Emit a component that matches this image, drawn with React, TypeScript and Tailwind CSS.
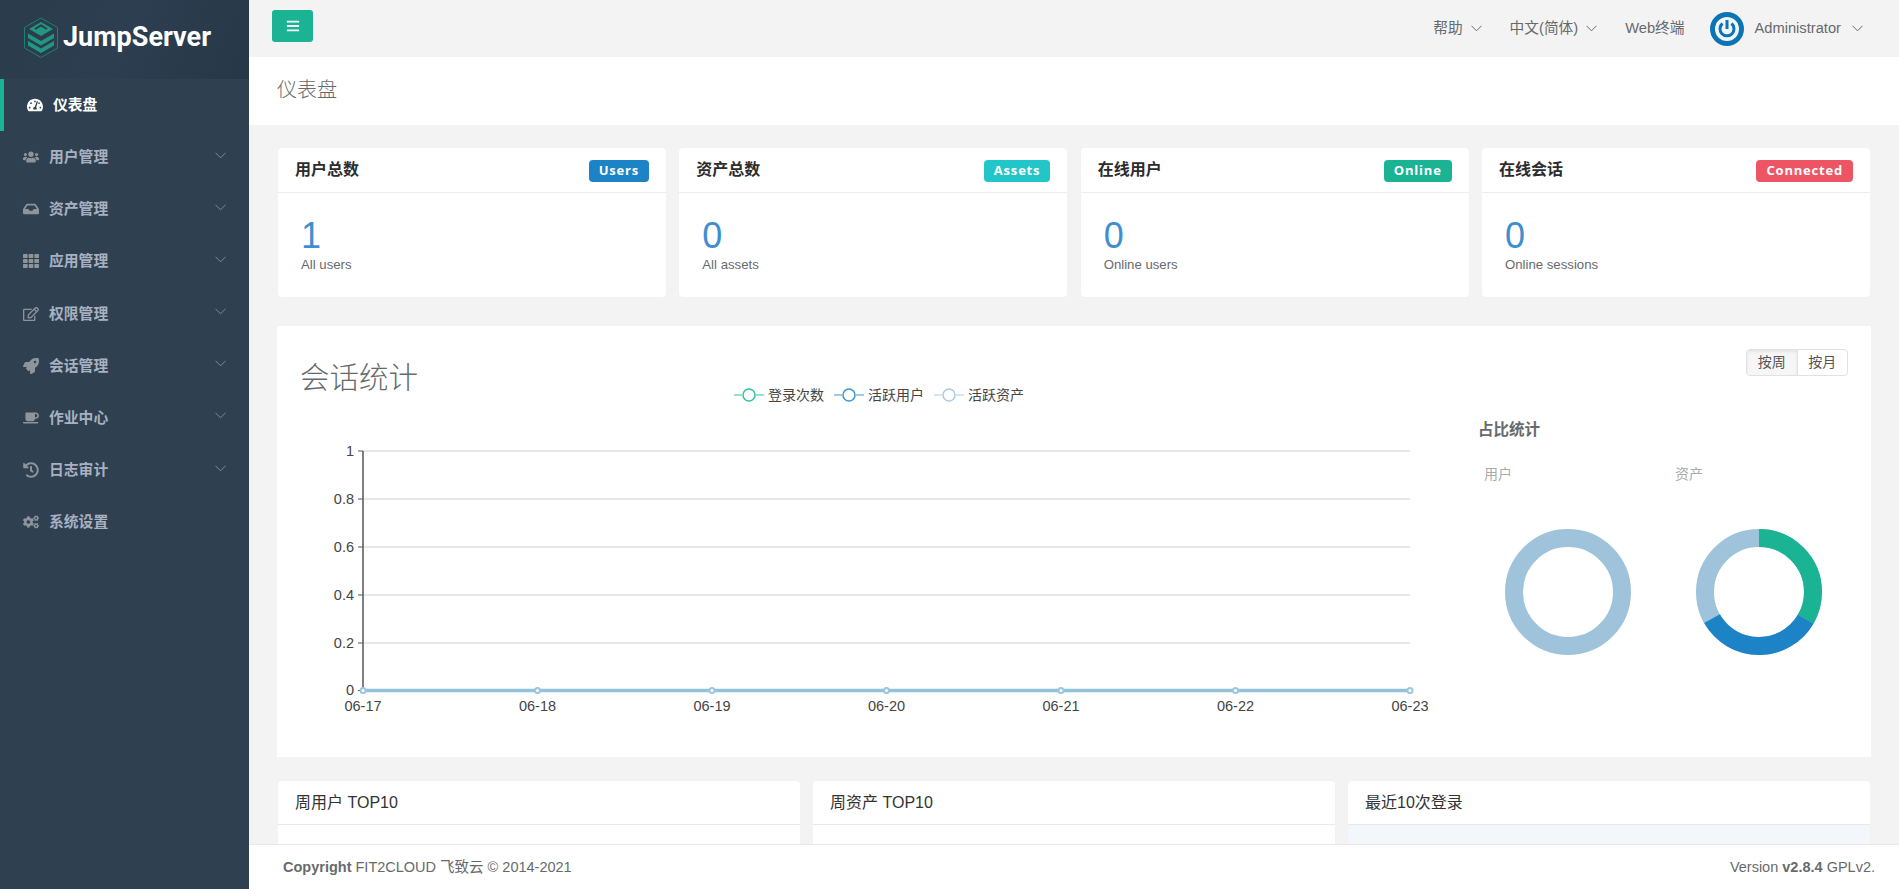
import {
  FaTachometerAlt,
  FaUsers,
  FaInbox,
  FaTh,
  FaRegEdit,
  FaRocket,
  FaCoffee,
  FaHistory,
  FaCogs,
  FaBars,
} from "react-icons/fa";

const menu = [
  { label: "用户管理", icon: FaUsers, arrow: true },
  { label: "资产管理", icon: FaInbox, arrow: true },
  { label: "应用管理", icon: FaTh, arrow: true },
  { label: "权限管理", icon: FaRegEdit, arrow: true },
  { label: "会话管理", icon: FaRocket, arrow: true },
  { label: "作业中心", icon: FaCoffee, arrow: true },
  { label: "日志审计", icon: FaHistory, arrow: true },
  { label: "系统设置", icon: FaCogs, arrow: false },
];

const cards = [
  { title: "用户总数", badge: "Users", color: "bg-[#1c84c6]", value: "1", sub: "All users" },
  { title: "资产总数", badge: "Assets", color: "bg-[#23c6c8]", value: "0", sub: "All assets" },
  { title: "在线用户", badge: "Online", color: "bg-[#1ab394]", value: "0", sub: "Online users" },
  { title: "在线会话", badge: "Connected", color: "bg-[#ed5565]", value: "0", sub: "Online sessions" },
];

const legend = [
  { label: "登录次数", color: "#2fc3a0" },
  { label: "活跃用户", color: "#3d94d6" },
  { label: "活跃资产", color: "#a9cde3" },
];

const yTicks = [
  { label: "1", y: 451 },
  { label: "0.8", y: 499 },
  { label: "0.6", y: 547 },
  { label: "0.4", y: 595 },
  { label: "0.2", y: 643 },
];

const days = ["06-17", "06-18", "06-19", "06-20", "06-21", "06-22", "06-23"];

const Chevron = ({ className }: { className: string }) => (
  <svg width="11" height="7" viewBox="0 0 11 7" fill="none" className={className}>
    <path d="M0.5 0.8L5.5 5.8L10.5 0.8" stroke="currentColor" strokeWidth="1" />
  </svg>
);

const Logo = () => (
  <svg width="36" height="42" viewBox="0 0 36 42" fill="none">
    <path d="M18 1L34.5 10.5V31L18 40.5L1.5 31V10.5Z" stroke="#1f7f73" strokeWidth="1" />
    <path d="M18 5L30 12L18 19L6 12Z" fill="#23967f" />
    <path d="M12 12L18 8.5L24 12" stroke="#2a3b4c" strokeWidth="2" />
    <path d="M5 16.5L18 24L31 16.5V21L18 28.5L5 21Z" fill="#23967f" />
    <path d="M5 24L18 31.5L31 24V28.5L18 36L5 28.5Z" fill="#23967f" />
  </svg>
);

const Avatar = () => (
  <svg width="34" height="34" viewBox="0 0 34 34" fill="none">
    <circle cx="17" cy="17" r="17" fill="#0a74b5" />
    <circle cx="17" cy="17" r="12" fill="#f1f6fa" />
    <path d="M12.5 11.5A7 7 0 1 0 21.5 11.5" stroke="#0a74b5" strokeWidth="3" />
    <path d="M17 8V17" stroke="#0a74b5" strokeWidth="3" />
  </svg>
);

const Donut = ({ split }: { split: boolean }) => {
  // 圆环每段占 120 度
  const r = 54;
  const c = 2 * Math.PI * r;
  return (
    <svg width="130" height="130" viewBox="0 0 130 130" fill="none">
      <g transform="rotate(-90 65 65)">
        <circle cx="65" cy="65" r={r} stroke="#9fc3da" strokeWidth="18" />
        {split && (
          <>
            <circle cx="65" cy="65" r={r} stroke="#1ab394" strokeWidth="18" strokeDasharray={`${c / 3} ${c}`} />
            <circle
              cx="65"
              cy="65"
              r={r}
              stroke="#1c84c6"
              strokeWidth="18"
              strokeDasharray={`${c / 3} ${c}`}
              strokeDashoffset={-c / 3}
            />
          </>
        )}
      </g>
    </svg>
  );
};

const Sidebar = () => (
  <aside className="w-[249px] shrink-0 bg-[#2f4050]">
    <div className="flex h-[79px] items-center gap-[4px] bg-[linear-gradient(115deg,#2b3c4c_0%,#2c3e50_50%,#273747_100%)] pb-[4px] pl-[23px]">
      <Logo />
      <span className="font-['Roboto',sans-serif] text-[27px] font-bold text-white">JumpServer</span>
    </div>
    <div className="flex h-[52.15px] items-center border-l-4 border-[#1ab394] pl-[23px] text-white">
      <FaTachometerAlt className="h-[16px] w-[16px]" />
      <span className="ml-[10px] text-[14.8px] font-semibold">仪表盘</span>
    </div>
    {menu.map((item) => {
      const Icon = item.icon;
      return (
        <div key={item.label} className="flex h-[52.15px] items-center pl-[23px] pr-[23px]">
          <Icon className="h-[16px] w-[16px] text-[#8e949c]" />
          <span className="ml-[10px] flex-1 text-[14.8px] font-semibold text-[#a7b1c2]">{item.label}</span>
          {item.arrow && <Chevron className="mb-[4px] text-[#7f8b98]" />}
        </div>
      );
    })}
  </aside>
);

const TopBar = () => (
  <div className="flex h-[57px] shrink-0 items-center justify-between pl-[23px] pr-[36px] text-[14.7px] text-[#676a6c]">
    <button className="mb-[6px] flex h-[32px] w-[41px] items-center justify-center rounded-[3px] bg-[#1ab394] text-white">
      <FaBars className="h-[14px] w-[14px]" />
    </button>
    <div className="flex items-center">
      <span>帮助</span>
      <Chevron className="ml-[8px]" />
      <span className="ml-[28px]">中文(简体)</span>
      <Chevron className="ml-[8px]" />
      <span className="ml-[28px]">Web终端</span>
      <span className="ml-[26px]">
        <Avatar />
      </span>
      <span className="ml-[10px]">Administrator</span>
      <Chevron className="ml-[11px]" />
    </div>
  </div>
);

const StatCards = () => (
  <div className="grid grid-cols-4 gap-[13.33px]">
    {cards.map((card) => (
      <div key={card.title} className="h-[149px] rounded-[4px] bg-white shadow-[0_0_1px_#e7eaec]">
        <div className="flex h-[45px] items-center justify-between border-b border-[#e9edf5] pl-[17px] pr-[17px]">
          <span className="text-base font-bold text-[#2c2c2c]">{card.title}</span>
          <span className={`mt-[2px] flex h-[22px] items-center rounded-[4px] px-[10px] font-['Open_Sans',sans-serif] text-[13px] font-bold tracking-[0.8px] text-white ${card.color}`}>
            {card.badge}
          </span>
        </div>
        <div className="pl-[23px] pt-[25px]">
          <div className="text-[36px] leading-[36px] text-[#3f8fd0]">{card.value}</div>
          <div className="mt-[2px] text-[13.2px] leading-[18px] text-[#676a6c]">{card.sub}</div>
        </div>
      </div>
    ))}
  </div>
);

const LineChart = () => (
  <svg width="1150" height="280" viewBox="300 440 1150 280" fill="none" className="mt-[35px]">
    {yTicks.map((t) => (
      <g key={t.label}>
        <line x1="363" x2="1410" y1={t.y} y2={t.y} stroke="#cfcfcf" />
        <line x1="358" x2="363" y1={t.y} y2={t.y} stroke="#555" />
        <text x="354" y={t.y + 5} textAnchor="end" fontSize="14.5" fill="#444">
          {t.label}
        </text>
      </g>
    ))}
    <line x1="358" x2="363" y1="690.5" y2="690.5" stroke="#555" />
    <text x="354" y="695" textAnchor="end" fontSize="14.5" fill="#444">
      0
    </text>
    <line x1="363" x2="363" y1="451" y2="691" stroke="#555" strokeWidth="1.5" />
    <line x1="363" x2="1410" y1="690.5" y2="690.5" stroke="#93c3dc" strokeWidth="3.5" />
    {days.map((d, i) => (
      <g key={d}>
        <circle cx={363 + i * 174.5} cy="690.5" r="2.5" fill="#fff" stroke="#9cc6dc" strokeWidth="2" />
        <text x={363 + i * 174.5} y="711" textAnchor="middle" fontSize="14.5" fill="#444">
          {d}
        </text>
      </g>
    ))}
  </svg>
);

const SessionPanel = () => (
  <div className="mx-[-1px] mt-[29px] flex h-[431px] bg-white pl-[23px] pr-[23px]">
    <div className="w-[1179px] shrink-0 pt-[31px]">
      <div className="flex h-[48px]">
        <h2 className="w-[434px] text-[29.5px] font-light leading-[42px] text-[#676a6c]">会话统计</h2>
        <div className="mt-[28px] flex h-[20px] gap-[10px]">
          {legend.map((l) => (
            <div key={l.label} className="flex w-[90px] items-center gap-[4px] text-[14px] text-[#444]">
              <svg width="30" height="14" viewBox="0 0 30 14" fill="none" className="shrink-0">
                <path d="M0 7H8M22 7H30" stroke={l.color} />
                <circle cx="15" cy="7" r="6" stroke={l.color} strokeWidth="1.5" />
              </svg>
              <span className="whitespace-nowrap">{l.label}</span>
            </div>
          ))}
        </div>
      </div>
      <LineChart />
    </div>
    <div className="min-w-0 flex-1 pt-[23px]">
      <div className="flex justify-end">
        <div className="flex h-[27px] w-[102px] overflow-hidden rounded-[4px] border border-[#dfe1e6] text-[14px] text-[#555]">
          <span className="flex flex-1 items-center justify-center border-r border-[#dfe1e6] bg-[#f6f6f6] shadow-[inset_0_2px_3px_#e4e4e4]">按周</span>
          <span className="flex flex-1 items-center justify-center">按月</span>
        </div>
      </div>
      <h3 className="ml-[-1px] mt-[44px] text-[15.5px] font-bold leading-[20px] text-[#676a6c]">占比统计</h3>
      <div className="mt-[24px] flex">
        {[
          { label: "用户", split: false },
          { label: "资产", split: true },
        ].map((d) => (
          <div key={d.label} className="w-[191px] shrink-0">
            <div className="pl-[5px] text-sm leading-[20px] text-[#aaa]">{d.label}</div>
            <div className="mt-[43px] pl-[24px]">
              <Donut split={d.split} />
            </div>
          </div>
        ))}
      </div>
    </div>
  </div>
);

const BottomCards = () => (
  <div className="mt-[24px] grid grid-cols-3 gap-[13px]">
    {[
      { title: "周用户 TOP10", body: "bg-white" },
      { title: "周资产 TOP10", body: "bg-white" },
      { title: "最近10次登录", body: "bg-[#f3f6fb]" },
    ].map((c) => (
      <div key={c.title} className="rounded-[4px] bg-white shadow-[0_0_1px_#e7eaec]">
        <div className="flex h-[44px] items-center border-b border-[#e7eaec] pl-[17px] text-base text-[#333]">{c.title}</div>
        <div className={`h-[200px] ${c.body}`} />
      </div>
    ))}
  </div>
);

const App = () => {
  return (
    <div className="flex h-screen w-full overflow-hidden bg-[#f3f3f4] font-['Liberation_Sans','Noto_Sans_CJK_SC',sans-serif]">
      <Sidebar />
      <main className="flex min-w-0 flex-1 flex-col">
        <TopBar />
        <div className="flex h-[68px] shrink-0 items-center bg-white pb-[2px] pl-[28px] text-[20px] font-light text-[#676a6c]">仪表盘</div>
        <div className="min-h-0 flex-1 overflow-hidden pl-[29px] pr-[29px] pt-[23px]">
          <StatCards />
          <SessionPanel />
          <BottomCards />
        </div>
        <footer className="flex h-[45px] shrink-0 items-center justify-between border-t border-[#e7eaec] bg-white pl-[34px] pr-[24px] pt-[1px] text-[14.5px] text-[#676a6c]">
          <div>
            <strong>Copyright</strong> FIT2CLOUD 飞致云 © 2014-2021
          </div>
          <div>
            Version <strong>v2.8.4</strong> GPLv2.
          </div>
        </footer>
      </main>
    </div>
  );
};

export default App;
